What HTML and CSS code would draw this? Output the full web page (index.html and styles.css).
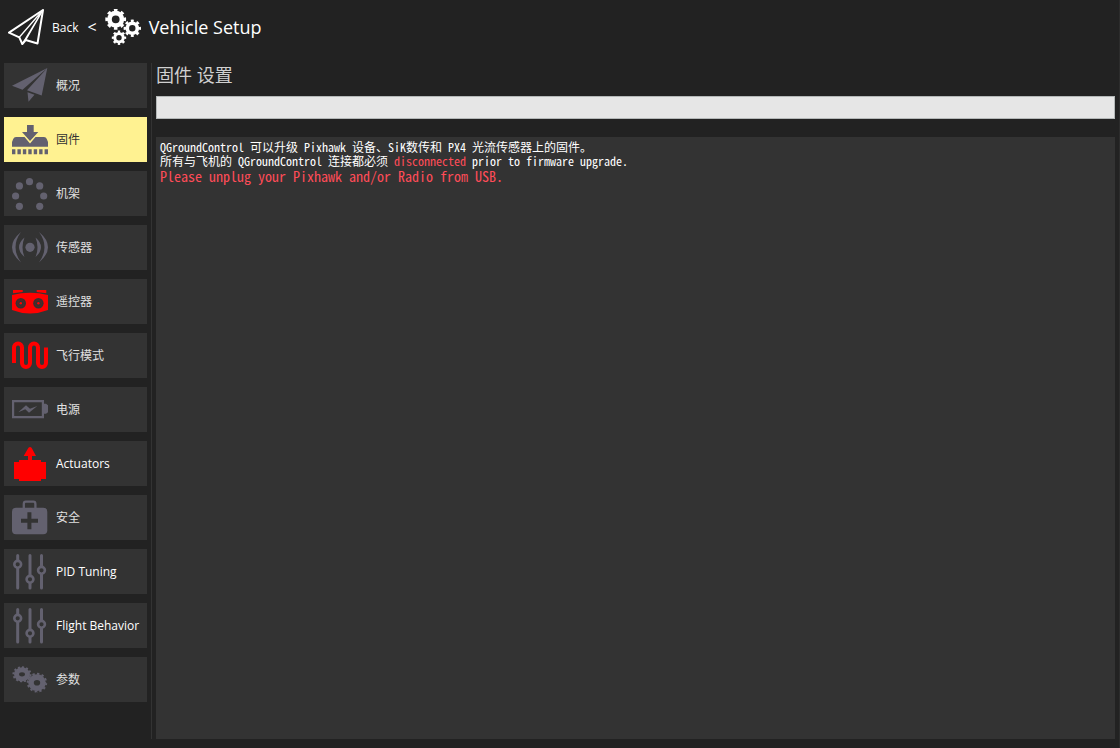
FILE: index.html
```html
<!DOCTYPE html>
<html lang="zh-CN">
<head>
<meta charset="utf-8">
<title>Vehicle Setup</title>
<link rel="stylesheet" href="styles.css">
</head>
<body>
<div class="app">
<header class="toolbar">
  <button class="back" type="button">
    <svg class="tool-icon" viewBox="0 0 36 36" aria-hidden="true"><g fill="none" stroke="#fff" stroke-linejoin="round"><path stroke-width="2" d="M35 1 1 23.700l10.300 4.600 3 6.700 3.400-4L29.500 34.500z"/><path stroke-width="1.300" d="M35 1 11.300 28.300M35 1 14.300 35M35 1 17.700 31"/></g></svg>
    <span>Back</span>
  </button>
  <span class="sep">&lt;</span>
  <svg class="tool-icon" viewBox="0 0 36 36" aria-hidden="true"><g fill="none" stroke="#fff">
    <circle cx="10.700" cy="10.300" r="6.200" stroke-width="4.600"/><circle cx="10.700" cy="10.300" r="8.800" stroke-width="3.200" pathLength="80" stroke-dasharray="5 5" stroke-dashoffset="2.500"/>
    <circle cx="27.300" cy="19.300" r="5" stroke-width="3.600"/><circle cx="27.300" cy="19.300" r="7.300" stroke-width="2.800" pathLength="80" stroke-dasharray="5 5" stroke-dashoffset="2.500"/>
    <circle cx="14" cy="28.700" r="4.200" stroke-width="3"/><circle cx="14" cy="28.700" r="6" stroke-width="2.400" pathLength="80" stroke-dasharray="5 5" stroke-dashoffset="2.500"/>
  </g></svg>
  <h1 class="title">Vehicle Setup</h1>
</header>
<div class="body">
<nav class="side">
  <button class="item" type="button"><svg class="icon" viewBox="0 0 36 37"><path d="M35.300 1 0 18.700l10.500 4zM35.300 1 29.700 28.500 15 23.300zM15.500 25.300l7 2.500-6 7z"/></svg><span class="zh">概况</span></button>
  <button class="item active" type="button"><svg class="icon" viewBox="0 0 36 37"><path d="M15 4h6.700v7h4.600L18 20 10 11h5zM4 16h8.500l5.500 6.600 5.500-6.600H32q2 0 2.800 2l1.200 3v4.700H0V21l1.200-3Q2 16 4 16z"/><path d="M0 30.800h36" fill="none" stroke="#63616f" stroke-width="5" stroke-dasharray="3.400 2.030"/></svg><span class="zh">固件</span></button>
  <button class="item" type="button"><svg class="icon" viewBox="0 0 36 37"><circle cx="17.500" cy="6.700" r="3.600"/><circle cx="7.400" cy="10.900" r="3.600"/><circle cx="27.700" cy="10.900" r="3.600"/><circle cx="3.600" cy="21" r="3.600"/><circle cx="31.700" cy="21" r="3.600"/><circle cx="7.400" cy="31.300" r="3.600"/><circle cx="27.700" cy="31.300" r="3.600"/></svg><span class="zh">机架</span></button>
  <button class="item" type="button"><svg class="icon" viewBox="0 0 36 37"><circle cx="18" cy="18.300" r="4.600"/><path d="M9 3Q-9 18 9 33.500-2 18 9 3zM27 3Q45 18 27 33.500 38 18 27 3zM12.500 8.500Q1.500 18 12.500 28 8.500 18 12.500 8.500zM23.500 8.500Q34.500 18 23.500 28 27.500 18 23.500 8.500z"/></svg><span class="zh">传感器</span></button>
  <button class="item alert" type="button"><svg class="icon" viewBox="0 0 36 37"><path d="M1 7h9.700v2L1 10.200zM24.700 7h9.600v3.200L24.700 9zM0 12Q18 7.500 36 12V27Q18 34 0 27z"/><g fill="#333"><circle cx="8.800" cy="20.300" r="5.200"/><circle cx="26.400" cy="20.300" r="5.200"/></g><g fill="none" stroke="#801515" stroke-width=".6"><circle cx="8.800" cy="20.300" r="3.200"/><circle cx="26.400" cy="20.300" r="3.200"/></g><circle cx="8.800" cy="20.300" r="1.200"/><circle cx="26.400" cy="20.300" r="1.200"/></svg><span class="zh">遥控器</span></button>
  <button class="item alert" type="button"><svg class="icon" viewBox="0 0 36 37"><path fill="none" stroke="#f00" stroke-width="4" d="M2 26V10.500a4 4 0 0 1 8 0V26a4 4 0 0 0 8 0V10.500a4 4 0 0 1 8 0V26a4 4 0 0 0 8 0V10.500"/></svg><span class="zh">飞行模式</span></button>
  <button class="item" type="button"><svg class="icon" viewBox="0 0 36 37"><path fill="none" stroke="#63616f" stroke-width="2.200" d="M1.100 10.100h29.800v16.100H1.100z"/><path d="M32 12.700h2l2 1.500v7l-2 1.500h-2zM6.300 21.300l7.700-7 4 3.400 7.300-2.700-8.300 6.700-3.700-3.400z"/></svg><span class="zh">电源</span></button>
  <button class="item alert" type="button"><svg class="icon" viewBox="0 0 36 37"><path d="M18 2q1.500 0 2 1.500L24 11h-4v4h9v2h5v17h-5v2H7v-2H2V17h5v-2h9v-4h-4.300L16 3.500Q16.500 2 18 2z"/></svg><span>Actuators</span></button>
  <button class="item" type="button"><svg class="icon" viewBox="0 0 36 37"><path fill="none" stroke="#63616f" stroke-width="2.300" d="M11.800 9V5q0-2.300 2-2.300h7.600q2 0 2 2.300v4"/><rect y="8.700" width="35.300" height="26.500" rx="4"/><path fill="#333" d="M15.400 13.300h4v6.500H26v4h-6.600v6.500h-4v-6.500H9v-4h6.400z"/></svg><span class="zh">安全</span></button>
  <button class="item" type="button"><svg class="icon" viewBox="0 0 36 37"><g fill="none" stroke="#63616f" stroke-width="3" stroke-linecap="round"><path d="M5.700 2.500V35M18 2.500V35M29.500 2.500V35"/><g fill="#333" stroke-width="2.600"><circle cx="5.700" cy="11.300" r="3.400"/><circle cx="18" cy="26.300" r="3.400"/><circle cx="29.500" cy="17.300" r="3.400"/></g></g></svg><span>PID Tuning</span></button>
  <button class="item" type="button"><svg class="icon" viewBox="0 0 36 37"><g fill="none" stroke="#63616f" stroke-width="3" stroke-linecap="round"><path d="M5.700 2.500V35M18 2.500V35M29.500 2.500V35"/><g fill="#333" stroke-width="2.600"><circle cx="5.700" cy="11.300" r="3.400"/><circle cx="18" cy="26.300" r="3.400"/><circle cx="29.500" cy="17.300" r="3.400"/></g></g></svg><span>Flight Behavior</span></button>
  <button class="item" type="button"><svg class="icon" viewBox="0 0 36 37"><g fill="none" stroke="#63616f"><ellipse cx="10" cy="13.300" rx="5.500" ry="4.600" stroke-width="5"/><ellipse cx="10" cy="13.300" rx="8.600" ry="7" stroke-width="2" pathLength="120" stroke-dasharray="5 5"/><ellipse cx="25" cy="21.700" rx="6" ry="5.600" stroke-width="5.600"/><ellipse cx="25" cy="21.700" rx="9.200" ry="8.900" stroke-width="2" pathLength="120" stroke-dasharray="5 5"/></g></svg><span class="zh">参数</span></button>
</nav>
<main class="main">
  <h2 class="heading">固件 设置</h2>
  <div class="progress" role="progressbar" aria-label="固件"></div>
  <section class="log">
    <p>QGroundControl 可以升级 Pixhawk 设备、SiK数传和 PX4 光流传感器上的固件。</p>
    <p>所有与飞机的 QGroundControl 连接都必须 <span class="warn">disconnected</span> prior to firmware upgrade.</p>
    <p class="warn large">Please unplug your Pixhawk and/or Radio from USB.</p>
  </section>
</main>
</div>
</div>
</body>
</html>
```
FILE: styles.css
```css
* { box-sizing: border-box; }
body {
  margin: 0;
  background: #222;
  color: #fff;
  font: 12px "Open Sans", "Noto Sans CJK SC", sans-serif;
}
button {
  border: 0;
  padding: 0;
  background: none;
  color: inherit;
  font: inherit;
  cursor: pointer;
}
h1, h2, p { margin: 0; font-weight: 400; }
.app {
  display: flex;
  flex-direction: column;
  min-height: 100vh;
  padding: 0 4px 9px;
  border-right: 1px solid #2c2c2c;
}
.toolbar {
  display: flex;
  align-items: center;
  height: 54px;
  margin-bottom: 9px;
  padding-left: 4px;
}
.tool-icon { width: 36px; height: 36px; flex: none; }
.back { display: flex; align-items: center; gap: 8px; }
.sep { margin: 0 8px 0 9px; font-size: 16px; }
.title { margin-left: 8px; font-size: 18px; }
.body { display: flex; flex: 1; }
.side {
  display: flex;
  flex-direction: column;
  gap: 9px;
  flex: none;
  padding-right: 4px;
  border-right: 1px solid #333;
}
.item {
  display: flex;
  align-items: center;
  gap: 8px;
  width: 143px;
  height: 45px;
  padding: 0 8px;
  background: #333;
  text-align: left;
  white-space: nowrap;
}
.icon { width: 36px; height: 37px; flex: none; fill: #63616f; }
.zh { padding-bottom: 1px; color: #e0e0e0; }
.active { background: #fff291; }
.active .zh { color: #333; }
.alert .icon { fill: #f00; }
.main {
  display: flex;
  flex-direction: column;
  flex: 1;
  min-width: 0;
  margin-left: 4px;
}
.heading { height: 33px; font-size: 18px; line-height: 24px; color: #d0d0d0; }
.progress { height: 23px; background: #e6e6e6; border: 1px solid #b4b8b8; }
.log {
  flex: 1;
  margin-top: 18px;
  padding: 3px 4px;
  background: #333;
  font-family: "Noto Sans Mono CJK SC", "Liberation Mono", "Noto Sans CJK SC", monospace;
  line-height: 14px;
}
.warn { color: #ff4c58; }
.large { font-size: 14px; line-height: 16px; }
```
